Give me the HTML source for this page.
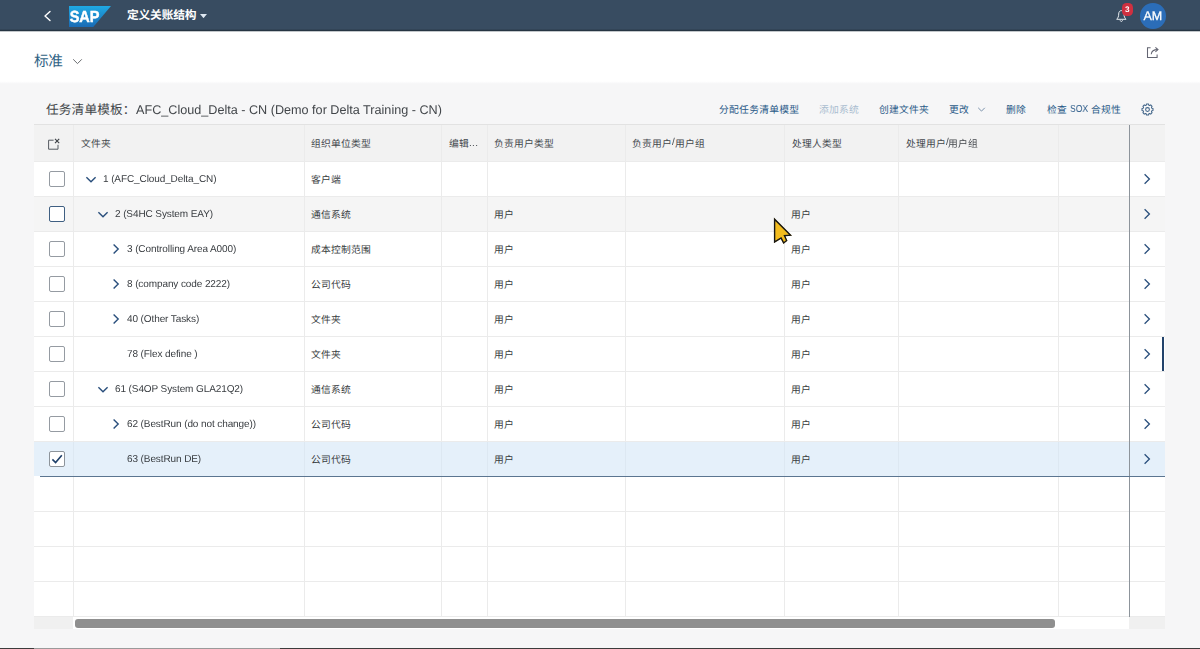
<!DOCTYPE html>
<html lang="zh-CN"><head><meta charset="utf-8"><title>定义关账结构</title><style>
*{margin:0;padding:0;box-sizing:border-box}
html,body{width:1200px;height:649px;overflow:hidden;background:#f6f6f7;font-family:"Liberation Sans",sans-serif;text-rendering:geometricPrecision}
.a,.c,.l{position:absolute;display:block}
.c{fill:currentColor;overflow:visible}
.c text{font-family:"Liberation Sans","Noto Sans CJK SC",sans-serif;font-size:1000px;fill:currentColor}
.c text.b{font-weight:700}
.l{white-space:pre;will-change:transform}
header.shell{position:absolute;z-index:2;left:0;top:0;width:1200px;height:32px;background:linear-gradient(to bottom,#384c61 0,#384c61 29.3px,#263542 29.9px,#263542 31px,rgba(38,53,66,.28) 31.1px,rgba(38,53,66,.28) 32px)}
.badge{position:absolute;left:1122.4px;top:3.2px;width:10.5px;height:12.8px;border-radius:4.6px;background:#cf3040;color:#fff;font-size:8.2px;font-weight:700;line-height:14.6px;text-align:center;will-change:transform}
.avatar{position:absolute;left:1140.1px;top:2.7px;width:25.7px;height:25.7px;border-radius:50%;background:#2b6db8;color:#fff;font-size:12.5px;line-height:27px;text-align:center;will-change:transform;-webkit-text-stroke:0.25px #fff}
.bar{position:absolute;left:0;top:31px;width:1200px;height:53px;background:linear-gradient(to bottom,#fff 0,#fff 50.3px,#f6f6f7 52.8px)}
.bar .a,.bar .c{margin-top:-31px}
.tbar{position:absolute;left:0;top:0;width:0;height:0}
.tbl{position:absolute;left:0;top:0;width:0;height:0}
.tbl:before{content:"";position:absolute;left:34px;top:124px;width:1131px;height:505px;background:#fff}
.hdr{position:absolute;left:34px;top:124px;width:1131px;height:37px;background:#f2f2f2;border-top:1px solid #e2e2e2}
.row{position:absolute;left:34px;width:1131px;height:34px}
.hov{background:#f5f5f5}
.sel{background:#e5f0fa}
.h{position:absolute;left:34px;width:1131px;height:1px;background:#ebebeb}
.selb{background:#5b7590;left:40px;width:1125px}
.v{position:absolute;top:125px;width:1px;height:492px;background:#ebebeb}
.v.vs{top:442px;height:34px;background:#dde8f2}
.v.fix{background:#8d949b}
.mark{position:absolute;left:1162px;top:337px;width:2.4px;height:33.5px;background:#23446c}
.sb{position:absolute;left:34px;top:617px;width:1131px;height:12px;background:#fff}
.sbl{position:absolute;left:0;top:0;width:39px;height:12px;background:#f0f0f0}
.sbr{position:absolute;left:1095.1px;top:0;width:35.8px;height:12px;background:#f0f0f0}
.thumb{position:absolute;left:40.5px;top:2.2px;width:980.5px;height:8.6px;border-radius:3px;background:#8f8f8f}
.cb{position:absolute;left:49px;width:16px;height:16px;border:1px solid #959ba2;border-radius:2px;background:#fff}
.cbh{border-color:#3f5f82}
.cbs{border-color:#8d949b}
.bot{position:absolute;left:0;top:648px;width:1200px;height:1px;background:#3c3c3c}
.bot2{position:absolute;left:34px;top:648px;width:246px;height:1px;background:#9a9a9a}
</style></head><body><header class="shell"><svg class="a" style="left:42px;top:9px" width="12" height="14" viewBox="0 0 12 14"><path d="M8 2.4 L3 7 L8 11.6" fill="none" stroke="#fff" stroke-width="1.4" stroke-linecap="round" stroke-linejoin="round"/></svg><svg class="a" style="left:68.7px;top:5.7px" width="42" height="21.3" viewBox="0 0 42 21.3"><defs><linearGradient id="sapg" x1="0" y1="0" x2="0" y2="1"><stop offset="0" stop-color="#1fa9e3"/><stop offset="1" stop-color="#1a6ab5"/></linearGradient></defs><path d="M0 0H42L24 21.3H0Z" fill="url(#sapg)"/><text x="0.7" y="16" font-family="Liberation Sans, sans-serif" font-weight="700" font-size="16" fill="#fff" stroke="#fff" stroke-width="0.5" textLength="29.8" lengthAdjust="spacingAndGlyphs" style="will-change:transform">SAP</text></svg><svg class="c" role="img" aria-label="定义关账结构" style="left:126.90px;top:9.32px;color:#fff;" width="69.30" height="11.55" viewBox="0 -880 6000 1000"><text class="b" x="0" y="0">定义关账结构</text></svg><svg class="a" style="left:200px;top:13.7px" width="7" height="4.2" viewBox="0 0 7 4.2"><path d="M0 0H7L3.5 4.2Z" fill="#dfe8f2"/></svg><svg class="a" style="left:1116px;top:9.6px" width="11" height="12" viewBox="0 0 11 12"><path d="M5.35 0.6C3.5 0.6 2.7 2.2 2.7 4C2.7 6.6 2 7.9 0.7 9.3H10C8.7 7.9 8 6.6 8 4C8 2.2 7.2 0.6 5.35 0.6Z" fill="none" stroke="#eef2f6" stroke-width="0.95" stroke-linejoin="round"/><path d="M4.1 10.3C4.3 11.1 4.8 11.4 5.35 11.4C5.9 11.4 6.4 11.1 6.6 10.3" fill="none" stroke="#eef2f6" stroke-width="0.95"/></svg><span class="badge">3</span><span class="avatar">AM</span></header><div class="bar"><svg class="c" role="img" aria-label="标准" style="left:34.06px;top:52.95px;color:#2f6385;" width="28.60" height="14.30" viewBox="0 -880 2000 1000"><text x="0" y="0">标准</text></svg><svg class="a" style="left:72px;top:57px" width="11" height="9" viewBox="0 0 11 9"><path d="M1.2 2.3L5.5 6.6L9.8 2.3" fill="none" stroke="#6a6d70" stroke-width="1"/></svg><svg class="a" style="left:1146px;top:46px" width="14" height="13" viewBox="0 0 14 13"><path d="M4.6 1.8H1.5V11.4H11.1V8.6" fill="none" stroke="#636572" stroke-width="1.05"/><path d="M5.2 8.2C5.6 5.4 7.6 3.6 11.4 3.6" fill="none" stroke="#636572" stroke-width="1.05"/><path d="M9.4 1.3L12 3.6L9.4 5.9" fill="none" stroke="#636572" stroke-width="1.05"/></svg></div><div class="tbar"><svg class="c" role="img" aria-label="任务清单模板：" style="left:45.92px;top:103.40px;color:#42464a;" width="89.60" height="12.80" viewBox="0 -880 7000 1000"><text x="0" y="0">任务清单模板：</text></svg><span class="l" style="left:136.00px;top:100.00px;font-size:12.63px;line-height:20px;color:#42464a;">AFC_Cloud_Delta - CN (Demo for Delta Training - CN)</span><svg class="c" role="img" aria-label="分配任务清单模型" style="left:718.76px;top:104.38px;color:#2a5a88;" width="80.40" height="10.05" viewBox="0 -880 8000 1000"><text x="0" y="0">分配任务清单模型</text></svg><svg class="c" role="img" aria-label="添加系统" style="left:819.22px;top:104.40px;color:#a9bccf;" width="40.00" height="10.00" viewBox="0 -880 4000 1000"><text x="0" y="0">添加系统</text></svg><svg class="c" role="img" aria-label="创建文件夹" style="left:879.33px;top:104.40px;color:#2a5a88;" width="50.00" height="10.00" viewBox="0 -880 5000 1000"><text x="0" y="0">创建文件夹</text></svg><svg class="c" role="img" aria-label="更改" style="left:949.33px;top:104.40px;color:#2a5a88;" width="20.00" height="10.00" viewBox="0 -880 2000 1000"><text x="0" y="0">更改</text></svg><svg class="a" style="left:976.5px;top:106.1px" width="9" height="7" viewBox="0 0 9 7"><path d="M1.2 1.8L4.5 5.1L7.8 1.8" fill="none" stroke="#6d87a3" stroke-width="0.9"/></svg><svg class="c" role="img" aria-label="删除" style="left:1006.21px;top:104.40px;color:#2a5a88;" width="20.00" height="10.00" viewBox="0 -880 2000 1000"><text x="0" y="0">删除</text></svg><svg class="c" role="img" aria-label="检查" style="left:1046.87px;top:104.40px;color:#2a5a88;" width="20.00" height="10.00" viewBox="0 -880 2000 1000"><text x="0" y="0">检查</text></svg><span class="l" style="left:1070.20px;top:102.10px;font-size:10.20px;line-height:16px;color:#2a5a88;transform:scaleX(.84);transform-origin:0 50%">SOX</span><svg class="c" role="img" aria-label="合规性" style="left:1091.20px;top:104.40px;color:#2a5a88;" width="30.00" height="10.00" viewBox="0 -880 3000 1000"><text x="0" y="0">合规性</text></svg><svg class="a" style="left:1141px;top:102.8px" width="13" height="13" viewBox="0 0 13 13"><path d="M10.86 5.21L12.01 5.53L12.01 7.47L10.86 7.79L10.50 8.67L11.09 9.71L9.71 11.09L8.67 10.50L7.79 10.86L7.47 12.01L5.53 12.01L5.21 10.86L4.33 10.50L3.29 11.09L1.91 9.71L2.50 8.67L2.14 7.79L0.99 7.47L0.99 5.53L2.14 5.21L2.50 4.33L1.91 3.29L3.29 1.91L4.33 2.50L5.21 2.14L5.53 0.99L7.47 0.99L7.79 2.14L8.67 2.50L9.71 1.91L11.09 3.29L10.50 4.33Z" fill="none" stroke="#43668a" stroke-width="1.05" stroke-linejoin="round"/><circle cx="6.5" cy="6.5" r="1.9" fill="none" stroke="#43668a" stroke-width="1.05"/></svg></div><div class="tbl"><div class="hdr"></div><div class="row hov" style="top:197px"></div><div class="row sel" style="top:442px"></div><i class="h" style="top:161px"></i><i class="h" style="top:196px"></i><i class="h" style="top:231px"></i><i class="h" style="top:266px"></i><i class="h" style="top:301px"></i><i class="h" style="top:336px"></i><i class="h" style="top:371px"></i><i class="h" style="top:406px"></i><i class="h" style="top:441px"></i><i class="h" style="top:511px"></i><i class="h" style="top:546px"></i><i class="h" style="top:581px"></i><i class="h" style="top:616px"></i><div class="sb"><i class="sbl"></i><i class="sbr"></i><i class="thumb"></i></div><i class="v" style="left:73.0px"></i><i class="v" style="left:304.0px"></i><i class="v" style="left:440.8px"></i><i class="v" style="left:487.0px"></i><i class="v" style="left:624.5px"></i><i class="v" style="left:784.0px"></i><i class="v" style="left:898.3px"></i><i class="v" style="left:1058.3px"></i><i class="v vs" style="left:73.0px"></i><i class="v vs" style="left:304.0px"></i><i class="v vs" style="left:440.8px"></i><i class="v vs" style="left:487.0px"></i><i class="v vs" style="left:624.5px"></i><i class="v vs" style="left:784.0px"></i><i class="v vs" style="left:898.3px"></i><i class="v vs" style="left:1058.3px"></i><i class="v fix" style="left:1129.1px"></i><i class="h selb" style="top:476px"></i><i class="mark"></i><svg class="a" style="left:47px;top:138px" width="14" height="13" viewBox="0 0 14 13"><path d="M6.6 2.2H1.6V11.2H11V6.8" fill="none" stroke="#555a60" stroke-width="1" stroke-linejoin="round"/><path d="M8 0.9L12.2 5.1M12.2 0.9L8 5.1" fill="none" stroke="#3d4146" stroke-width="1.15"/></svg><svg class="c" role="img" aria-label="文件夹" style="left:80.84px;top:138.40px;color:#44484d;" width="30.00" height="10.00" viewBox="0 -880 3000 1000"><text x="0" y="0">文件夹</text></svg><svg class="c" role="img" aria-label="组织单位类型" style="left:311.38px;top:138.40px;color:#44484d;" width="60.00" height="10.00" viewBox="0 -880 6000 1000"><text x="0" y="0">组织单位类型</text></svg><svg class="c" role="img" aria-label="编辑" style="left:448.52px;top:138.40px;color:#44484d;" width="20.00" height="10.00" viewBox="0 -880 2000 1000"><text x="0" y="0">编辑</text></svg><span class="l" style="left:469.00px;top:136.00px;font-size:10.00px;line-height:16px;color:#44484d;letter-spacing:0.3px">...</span><svg class="c" role="img" aria-label="负责用户类型" style="left:494.16px;top:138.40px;color:#44484d;" width="60.00" height="10.00" viewBox="0 -880 6000 1000"><text x="0" y="0">负责用户类型</text></svg><svg class="c" role="img" aria-label="负责用户" style="left:631.66px;top:138.40px;color:#44484d;" width="40.00" height="10.00" viewBox="0 -880 4000 1000"><text x="0" y="0">负责用户</text></svg><span class="l" style="left:672.00px;top:135.40px;font-size:10.00px;line-height:16px;color:#44484d;">/</span><svg class="c" role="img" aria-label="用户组" style="left:674.68px;top:138.40px;color:#44484d;" width="30.00" height="10.00" viewBox="0 -880 3000 1000"><text x="0" y="0">用户组</text></svg><svg class="c" role="img" aria-label="处理人类型" style="left:791.66px;top:138.40px;color:#44484d;" width="50.00" height="10.00" viewBox="0 -880 5000 1000"><text x="0" y="0">处理人类型</text></svg><svg class="c" role="img" aria-label="处理用户" style="left:905.66px;top:138.40px;color:#44484d;" width="40.00" height="10.00" viewBox="0 -880 4000 1000"><text x="0" y="0">处理用户</text></svg><span class="l" style="left:945.80px;top:135.40px;font-size:10.00px;line-height:16px;color:#44484d;">/</span><svg class="c" role="img" aria-label="用户组" style="left:948.48px;top:138.40px;color:#44484d;" width="30.00" height="10.00" viewBox="0 -880 3000 1000"><text x="0" y="0">用户组</text></svg><span class="cb" style="top:171px"></span><svg class="a" style="left:85.2px;top:175.8px" width="12" height="8" viewBox="0 0 12 8"><path d="M1.4 1.2L6 5.8L10.6 1.2" fill="none" stroke="#2a4f7c" stroke-width="1.4"/></svg><span class="l" style="left:103.00px;top:171.70px;font-size:10.00px;line-height:16px;color:#383c40;letter-spacing:-0.1px">1 (AFC_Cloud_Delta_CN)</span><svg class="c" role="img" aria-label="客户端" style="left:311.05px;top:174.20px;color:#383c40;" width="30.00" height="10.00" viewBox="0 -880 3000 1000"><text x="0" y="0">客户端</text></svg><svg class="a" style="left:1143px;top:172.9px" width="8" height="12" viewBox="0 0 8 12"><path d="M1.6 1.3L6.4 6L1.6 10.7" fill="none" stroke="#2a4f7c" stroke-width="1.3"/></svg><span class="cb cbh" style="top:206px"></span><svg class="a" style="left:97.4px;top:210.8px" width="12" height="8" viewBox="0 0 12 8"><path d="M1.4 1.2L6 5.8L10.6 1.2" fill="none" stroke="#2a4f7c" stroke-width="1.4"/></svg><span class="l" style="left:115.05px;top:206.70px;font-size:10.00px;line-height:16px;color:#383c40;letter-spacing:-0.1px">2 (S4HC System EAY)</span><svg class="c" role="img" aria-label="通信系统" style="left:311.01px;top:209.20px;color:#383c40;" width="40.00" height="10.00" viewBox="0 -880 4000 1000"><text x="0" y="0">通信系统</text></svg><svg class="c" role="img" aria-label="用户" style="left:494.08px;top:209.10px;color:#383c40;" width="20.00" height="10.00" viewBox="0 -880 2000 1000"><text x="0" y="0">用户</text></svg><svg class="c" role="img" aria-label="用户" style="left:791.08px;top:209.10px;color:#383c40;" width="20.00" height="10.00" viewBox="0 -880 2000 1000"><text x="0" y="0">用户</text></svg><svg class="a" style="left:1143px;top:207.9px" width="8" height="12" viewBox="0 0 8 12"><path d="M1.6 1.3L6.4 6L1.6 10.7" fill="none" stroke="#2a4f7c" stroke-width="1.3"/></svg><span class="cb" style="top:241px"></span><svg class="a" style="left:111.6px;top:243.3px" width="8" height="12" viewBox="0 0 8 12"><path d="M1.6 1.4L6.2 6L1.6 10.6" fill="none" stroke="#2a4f7c" stroke-width="1.4"/></svg><span class="l" style="left:127.10px;top:241.70px;font-size:10.00px;line-height:16px;color:#383c40;letter-spacing:-0.1px">3 (Controlling Area A000)</span><svg class="c" role="img" aria-label="成本控制范围" style="left:311.04px;top:244.20px;color:#383c40;" width="60.00" height="10.00" viewBox="0 -880 6000 1000"><text x="0" y="0">成本控制范围</text></svg><svg class="c" role="img" aria-label="用户" style="left:494.08px;top:244.10px;color:#383c40;" width="20.00" height="10.00" viewBox="0 -880 2000 1000"><text x="0" y="0">用户</text></svg><svg class="c" role="img" aria-label="用户" style="left:791.08px;top:244.10px;color:#383c40;" width="20.00" height="10.00" viewBox="0 -880 2000 1000"><text x="0" y="0">用户</text></svg><svg class="a" style="left:1143px;top:242.9px" width="8" height="12" viewBox="0 0 8 12"><path d="M1.6 1.3L6.4 6L1.6 10.7" fill="none" stroke="#2a4f7c" stroke-width="1.3"/></svg><span class="cb" style="top:276px"></span><svg class="a" style="left:111.6px;top:278.3px" width="8" height="12" viewBox="0 0 8 12"><path d="M1.6 1.4L6.2 6L1.6 10.6" fill="none" stroke="#2a4f7c" stroke-width="1.4"/></svg><span class="l" style="left:127.10px;top:276.70px;font-size:10.00px;line-height:16px;color:#383c40;letter-spacing:-0.1px">8 (company code 2222)</span><svg class="c" role="img" aria-label="公司代码" style="left:310.89px;top:279.20px;color:#383c40;" width="40.00" height="10.00" viewBox="0 -880 4000 1000"><text x="0" y="0">公司代码</text></svg><svg class="c" role="img" aria-label="用户" style="left:494.08px;top:279.10px;color:#383c40;" width="20.00" height="10.00" viewBox="0 -880 2000 1000"><text x="0" y="0">用户</text></svg><svg class="c" role="img" aria-label="用户" style="left:791.08px;top:279.10px;color:#383c40;" width="20.00" height="10.00" viewBox="0 -880 2000 1000"><text x="0" y="0">用户</text></svg><svg class="a" style="left:1143px;top:277.9px" width="8" height="12" viewBox="0 0 8 12"><path d="M1.6 1.3L6.4 6L1.6 10.7" fill="none" stroke="#2a4f7c" stroke-width="1.3"/></svg><span class="cb" style="top:311px"></span><svg class="a" style="left:111.6px;top:313.3px" width="8" height="12" viewBox="0 0 8 12"><path d="M1.6 1.4L6.2 6L1.6 10.6" fill="none" stroke="#2a4f7c" stroke-width="1.4"/></svg><span class="l" style="left:127.10px;top:311.70px;font-size:10.00px;line-height:16px;color:#383c40;letter-spacing:-0.1px">40 (Other Tasks)</span><svg class="c" role="img" aria-label="文件夹" style="left:311.04px;top:314.20px;color:#383c40;" width="30.00" height="10.00" viewBox="0 -880 3000 1000"><text x="0" y="0">文件夹</text></svg><svg class="c" role="img" aria-label="用户" style="left:494.08px;top:314.10px;color:#383c40;" width="20.00" height="10.00" viewBox="0 -880 2000 1000"><text x="0" y="0">用户</text></svg><svg class="c" role="img" aria-label="用户" style="left:791.08px;top:314.10px;color:#383c40;" width="20.00" height="10.00" viewBox="0 -880 2000 1000"><text x="0" y="0">用户</text></svg><svg class="a" style="left:1143px;top:312.9px" width="8" height="12" viewBox="0 0 8 12"><path d="M1.6 1.3L6.4 6L1.6 10.7" fill="none" stroke="#2a4f7c" stroke-width="1.3"/></svg><span class="cb" style="top:346px"></span><span class="l" style="left:127.10px;top:346.70px;font-size:10.00px;line-height:16px;color:#383c40;letter-spacing:-0.1px">78 (Flex define )</span><svg class="c" role="img" aria-label="文件夹" style="left:311.04px;top:349.20px;color:#383c40;" width="30.00" height="10.00" viewBox="0 -880 3000 1000"><text x="0" y="0">文件夹</text></svg><svg class="c" role="img" aria-label="用户" style="left:494.08px;top:349.10px;color:#383c40;" width="20.00" height="10.00" viewBox="0 -880 2000 1000"><text x="0" y="0">用户</text></svg><svg class="c" role="img" aria-label="用户" style="left:791.08px;top:349.10px;color:#383c40;" width="20.00" height="10.00" viewBox="0 -880 2000 1000"><text x="0" y="0">用户</text></svg><svg class="a" style="left:1143px;top:347.9px" width="8" height="12" viewBox="0 0 8 12"><path d="M1.6 1.3L6.4 6L1.6 10.7" fill="none" stroke="#2a4f7c" stroke-width="1.3"/></svg><span class="cb" style="top:381px"></span><svg class="a" style="left:97.4px;top:385.8px" width="12" height="8" viewBox="0 0 12 8"><path d="M1.4 1.2L6 5.8L10.6 1.2" fill="none" stroke="#2a4f7c" stroke-width="1.4"/></svg><span class="l" style="left:115.05px;top:381.70px;font-size:10.00px;line-height:16px;color:#383c40;letter-spacing:-0.1px">61 (S4OP System GLA21Q2)</span><svg class="c" role="img" aria-label="通信系统" style="left:311.01px;top:384.20px;color:#383c40;" width="40.00" height="10.00" viewBox="0 -880 4000 1000"><text x="0" y="0">通信系统</text></svg><svg class="c" role="img" aria-label="用户" style="left:494.08px;top:384.10px;color:#383c40;" width="20.00" height="10.00" viewBox="0 -880 2000 1000"><text x="0" y="0">用户</text></svg><svg class="c" role="img" aria-label="用户" style="left:791.08px;top:384.10px;color:#383c40;" width="20.00" height="10.00" viewBox="0 -880 2000 1000"><text x="0" y="0">用户</text></svg><svg class="a" style="left:1143px;top:382.9px" width="8" height="12" viewBox="0 0 8 12"><path d="M1.6 1.3L6.4 6L1.6 10.7" fill="none" stroke="#2a4f7c" stroke-width="1.3"/></svg><span class="cb" style="top:416px"></span><svg class="a" style="left:111.6px;top:418.3px" width="8" height="12" viewBox="0 0 8 12"><path d="M1.6 1.4L6.2 6L1.6 10.6" fill="none" stroke="#2a4f7c" stroke-width="1.4"/></svg><span class="l" style="left:127.10px;top:416.70px;font-size:10.00px;line-height:16px;color:#383c40;letter-spacing:-0.1px">62 (BestRun (do not change))</span><svg class="c" role="img" aria-label="公司代码" style="left:310.89px;top:419.20px;color:#383c40;" width="40.00" height="10.00" viewBox="0 -880 4000 1000"><text x="0" y="0">公司代码</text></svg><svg class="c" role="img" aria-label="用户" style="left:494.08px;top:419.10px;color:#383c40;" width="20.00" height="10.00" viewBox="0 -880 2000 1000"><text x="0" y="0">用户</text></svg><svg class="c" role="img" aria-label="用户" style="left:791.08px;top:419.10px;color:#383c40;" width="20.00" height="10.00" viewBox="0 -880 2000 1000"><text x="0" y="0">用户</text></svg><svg class="a" style="left:1143px;top:417.9px" width="8" height="12" viewBox="0 0 8 12"><path d="M1.6 1.3L6.4 6L1.6 10.7" fill="none" stroke="#2a4f7c" stroke-width="1.3"/></svg><span class="cb cbs" style="top:451px"></span><svg class="a" style="left:51px;top:452.8px" width="12" height="12" viewBox="0 0 12 12"><path d="M1.4 6.4L4.6 9.6L10.8 2.2" fill="none" stroke="#1f406a" stroke-width="1.6"/></svg><span class="l" style="left:127.10px;top:451.70px;font-size:10.00px;line-height:16px;color:#383c40;letter-spacing:-0.1px">63 (BestRun DE)</span><svg class="c" role="img" aria-label="公司代码" style="left:310.89px;top:454.20px;color:#383c40;" width="40.00" height="10.00" viewBox="0 -880 4000 1000"><text x="0" y="0">公司代码</text></svg><svg class="c" role="img" aria-label="用户" style="left:494.08px;top:454.10px;color:#383c40;" width="20.00" height="10.00" viewBox="0 -880 2000 1000"><text x="0" y="0">用户</text></svg><svg class="c" role="img" aria-label="用户" style="left:791.08px;top:454.10px;color:#383c40;" width="20.00" height="10.00" viewBox="0 -880 2000 1000"><text x="0" y="0">用户</text></svg><svg class="a" style="left:1143px;top:452.9px" width="8" height="12" viewBox="0 0 8 12"><path d="M1.6 1.3L6.4 6L1.6 10.7" fill="none" stroke="#2a4f7c" stroke-width="1.3"/></svg></div><svg class="a" style="left:770px;top:214px" width="26" height="34" viewBox="770 214 26 34"><defs><clipPath id="cc"><path id="cp" d="M773.9 217.6L792.1 235.8L785.5 236.2L787.5 240.8L783.4 244L780.8 239L773.9 243.2Z"/></clipPath></defs><use href="#cp" fill="#f3bc1e" stroke="#161616" stroke-width="2.8" stroke-linejoin="miter" clip-path="url(#cc)"/></svg><i class="bot"></i><i class="bot2"></i></body></html>
